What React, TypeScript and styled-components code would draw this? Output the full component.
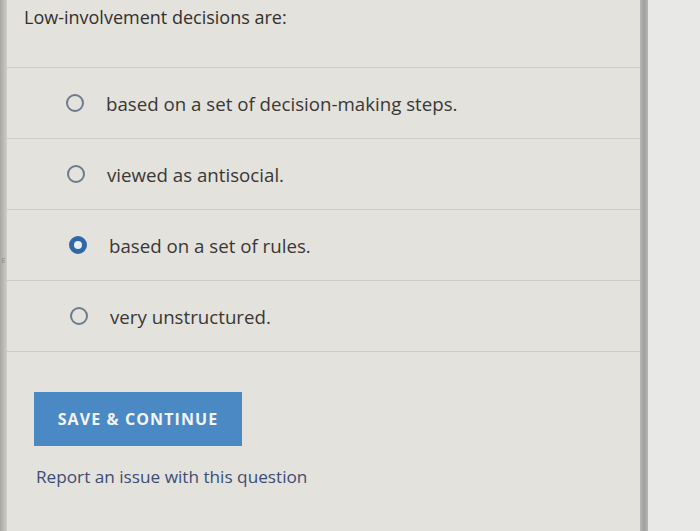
import * as React from 'react';
import styled, {createGlobalStyle} from 'styled-components';

const GlobalStyle = createGlobalStyle`
    html, body {
        margin: 0;
        padding: 0;
        background: #e5e3de;
    }
    body {
        font-family: "Open Sans", "Lato", sans-serif;
    }
`;

const Screen = styled.div`
    display: flex;
    width: 700px;
    height: 531px;
    overflow: hidden;
    background: #e5e3de;
`;

const Bezel = styled.div`
    width: 7px;
    background: linear-gradient(90deg, #a9a7a3, #cfcdc8);
    display: flex;
    flex-direction: column;
    justify-content: center;
    align-items: center;
`;

const BezelMark = styled.span`
    font-size: 8px;
    line-height: 10px;
    color: #8d8c88;
    margin-top: -12px;
`;

const Panel = styled.div`
    flex: 1;
    display: flex;
    flex-direction: column;
    background: #e4e2dd;
`;

const Title = styled.div`
    height: 68px;
    box-sizing: border-box;
    padding: 5px 0 0 17px;
    font-size: 18px;
    color: #33302e;
    border-bottom: 1px solid #cfcdc8;
`;

const OptionList = styled.div`
    display: flex;
    flex-direction: column;
`;

const OptionRow = styled.label<{indent: number}>`
    height: 70px;
    display: flex;
    align-items: center;
    padding-left: ${(p) => p.indent}px;
    border-bottom: 1px solid #cfcdc8;
    font-size: 18.7px;
    color: #3a3735;
    cursor: pointer;
`;

const Radio = styled.span<{checked?: boolean}>`
    width: 18px;
    height: 18px;
    box-sizing: border-box;
    border-radius: 50%;
    margin-right: 22px;
    flex-shrink: 0;
    border: ${(p) => (p.checked ? '5px solid #2e68a6' : '2px solid #6d7b8e')};
    background: ${(p) => (p.checked ? '#e9eef4' : 'transparent')};
`;

const Footer = styled.div`
    padding: 40px 0 0 27px;
    display: flex;
    flex-direction: column;
    align-items: flex-start;
`;

const SaveButton = styled.button`
    width: 208px;
    height: 54px;
    border: none;
    background: #4a89c3;
    color: #f3f5f8;
    font-family: "Open Sans", "Lato", sans-serif;
    font-weight: 700;
    font-size: 16px;
    letter-spacing: 1.1px;
    cursor: pointer;
`;

const ReportLink = styled.a`
    margin-top: 19px;
    margin-left: 2px;
    font-size: 17.2px;
    color: #3b4d74;
    text-decoration: none;
`;

const Divider = styled.div`
    width: 8px;
    background: linear-gradient(90deg, #b9b8b5, #9f9f9d, #b6b5b2);
`;

const Side = styled.div`
    width: 52px;
    background: #e8e8e6;
`;

const options = [
    {text: 'based on a set of decision-making steps.', indent: 59, checked: false},
    {text: 'viewed as antisocial.', indent: 60, checked: false},
    {text: 'based on a set of rules.', indent: 62, checked: true},
    {text: 'very unstructured.', indent: 63, checked: false},
];

const App: React.FC = () => {
    return (
        <>
            <GlobalStyle/>
            <Screen>
                <Bezel><BezelMark>E</BezelMark></Bezel>
                <Panel>
                    <Title>Low-involvement decisions are:</Title>
                    <OptionList>
                        {options.map((o) => (
                            <OptionRow key={o.text} indent={o.indent}>
                                <Radio checked={o.checked}/>
                                {o.text}
                            </OptionRow>
                        ))}
                    </OptionList>
                    <Footer>
                        <SaveButton>SAVE &amp; CONTINUE</SaveButton>
                        <ReportLink href="#">Report an issue with this question</ReportLink>
                    </Footer>
                </Panel>
                <Divider/>
                <Side/>
            </Screen>
        </>
    );
};

export default App;
